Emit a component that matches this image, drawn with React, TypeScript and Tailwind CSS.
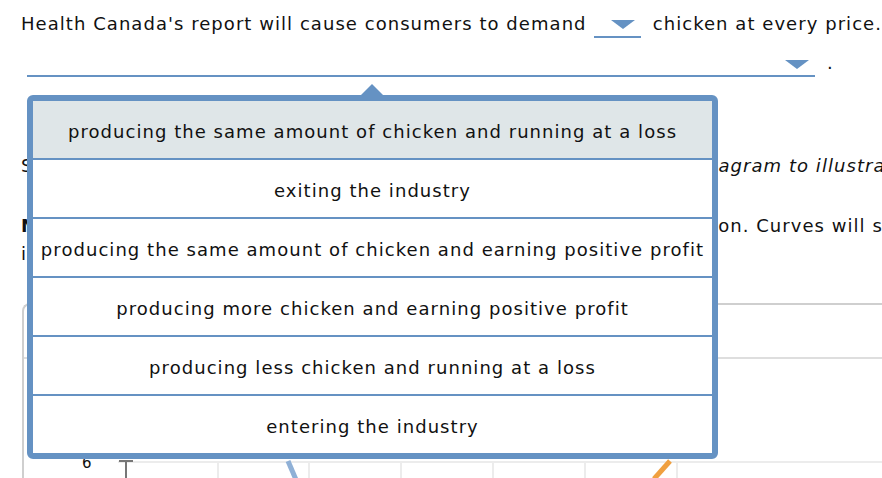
import React from "react";

const options = [
  "producing the same amount of chicken and running at a loss",
  "exiting the industry",
  "producing the same amount of chicken and earning positive profit",
  "producing more chicken and earning positive profit",
  "producing less chicken and running at a loss",
  "entering the industry",
];

function Caret({ className }: { className: string }) {
  return (
    <svg className={className} viewBox="0 0 24 9" fill="#6592c3">
      <polygon points="0,0 24,0 12,9" />
    </svg>
  );
}

export default function App() {
  return (
    <div
      className="relative w-[882px] h-[478px] overflow-hidden bg-white text-[#111] text-[18px] tracking-[1.05px]"
      style={{ fontFamily: '"DejaVu Sans", Verdana, sans-serif' }}
    >
      {/* Question sentence */}
      <div className="pl-[21px] pt-[10px] leading-[28px]">
        <div className="flex items-end whitespace-nowrap">
          <span>Health Canada's report will cause consumers to demand</span>
          <span className="ml-[7px] w-[49px] h-[26px] border-b-2 border-[#6592c3] flex justify-end items-start pt-[8px] pr-[6px]">
            <Caret className="w-[24px] h-[9px]" />
          </span>
          <span className="ml-[12px]">chicken at every price.</span>
        </div>
        <div className="flex items-end mt-[11px] ml-[6px]">
          <span className="w-[788px] h-[28px] border-b-2 border-[#6592c3] flex justify-end items-start pt-[10px] pr-[6px]">
            <Caret className="w-[24px] h-[11px]" />
          </span>
          <span className="ml-[12px] leading-[28px]">.</span>
        </div>
      </div>

      {/* Content behind the menu */}
      <div className="pl-[21px] mt-[75px] whitespace-nowrap">
        <div className="flex leading-[28px]">
          <span>S</span>
          <span className="ml-[685px] italic">agram to illustra</span>
        </div>
        <div className="flex leading-[28px] mt-[32px]">
          <span className="font-bold">N</span>
          <span className="ml-[681px]">on. Curves will s</span>
        </div>
        <div className="leading-[28px]">i</div>
      </div>

      {/* Graph panel */}
      <div className="ml-[22px] mt-[35px] h-[200px] border-l-2 border-t-2 border-[#cfcfcf] rounded-tl-[8px]">
        <div className="h-[54px] border-b-2 border-[#dedede]" />
        <div className="relative h-[140px]">
          <div className="absolute left-[58px] top-[97px] text-[15px] leading-none tracking-normal">6</div>
          <div className="absolute left-[94px] top-[102px] right-0 h-[2px] bg-[#ececec]" />
          <div className="absolute left-[193px] top-[102px] bottom-0 w-[2px] bg-[#ececec]" />
          <div className="absolute left-[284px] top-[102px] bottom-0 w-[2px] bg-[#ececec]" />
          <div className="absolute left-[376px] top-[102px] bottom-0 w-[2px] bg-[#ececec]" />
          <div className="absolute left-[468px] top-[102px] bottom-0 w-[2px] bg-[#ececec]" />
          <div className="absolute left-[560px] top-[102px] bottom-0 w-[2px] bg-[#ececec]" />
          <div className="absolute left-[652px] top-[102px] bottom-0 w-[2px] bg-[#ececec]" />
          <div className="absolute left-[95px] top-[101px] w-[14px] h-[2px] bg-[#777]" />
          <div className="absolute left-[101px] top-[101px] bottom-0 w-[2px] bg-[#777]" />
          <svg className="absolute left-0 top-[100px]" width="860" height="40">
            <line x1="264" y1="2" x2="276" y2="30" stroke="#8fb0d6" strokeWidth="5" />
            <line x1="646" y1="2" x2="630" y2="20" stroke="#f0a040" strokeWidth="5" />
          </svg>
        </div>
      </div>

      {/* Dropdown menu */}
      <div className="absolute left-[27px] top-[95px] w-[691px] h-[364px] border-[6px] border-[#6592c3] rounded-[6px] bg-white">
        <svg className="absolute left-[327px] -top-[17px]" width="24" height="12" viewBox="0 0 24 12">
          <polygon points="0,12 12,0 24,12" fill="#6592c3" />
        </svg>
        <div className="flex flex-col">
          {options.map((o, i) => (
            <div
              key={o}
              className={
                "flex items-center justify-center whitespace-nowrap pt-[3px] " +
                (i === 0 ? "h-[57px] bg-[#dfe6e8]" : "h-[59px] border-t-2 border-[#6592c3]")
              }
            >
              {o}
            </div>
          ))}
        </div>
      </div>
    </div>
  );
}
